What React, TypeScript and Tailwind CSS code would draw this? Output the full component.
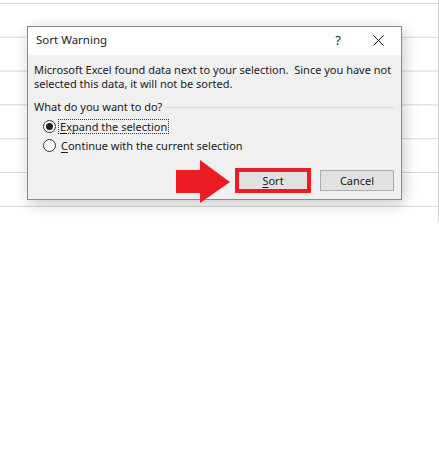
import React from "react";

const font = { fontFamily: '"Noto Sans", "Open Sans", sans-serif' };

function Radio({ checked }: { checked?: boolean }) {
  return (
    <span className="flex h-[13px] w-[13px] items-center justify-center rounded-full border border-[#333333] bg-white">
      {checked && <span className="h-[7px] w-[7px] rounded-full bg-[#2b1a2b]" />}
    </span>
  );
}

export default function App() {
  return (
    <div className="relative h-[454px] w-[439px] overflow-hidden bg-white text-[11px] text-[#1a1a1a]" style={font}>
      {/* spreadsheet grid behind the dialog */}
      <div className="h-[222px] w-full bg-[linear-gradient(to_right,#d6d6d6_1px,transparent_1px),linear-gradient(to_bottom,#d6d6d6_1px,transparent_1px)] bg-[size:109px_33.8px] bg-[position:2px_3px]" />

      {/* Sort Warning dialog */}
      <div className="absolute left-[27px] top-[26px] flex h-[174px] w-[375px] flex-col border border-[#8a8a8a] bg-[#f0f0f0] shadow-[2px_4px_14px_rgba(0,0,0,0.22)]">
        <div className="flex h-[28px] items-center bg-white pb-[2px] pl-[8px]">
          <span className="flex-1 text-[11.5px] leading-none">Sort Warning</span>
          <span className="w-[12px] text-center text-[13px] leading-none">?</span>
          <span className="ml-[28px] mr-[17px] flex h-[12px] w-[12px] items-center justify-center">
            <svg width="11" height="11" viewBox="0 0 11 11">
              <path d="M0.5 0.5 L10.5 10.5 M10.5 0.5 L0.5 10.5" stroke="#1a1a1a" strokeWidth="1" />
            </svg>
          </span>
        </div>

        <div className="flex flex-1 flex-col px-[6px] pt-[8px]">
          <p className="whitespace-pre leading-[14px]">
            {"Microsoft Excel found data next to your selection.  Since you have not\nselected this data, it will not be sorted."}
          </p>

          <div className="mt-[9px] flex items-center leading-[14px]">
            <span>What do you want to do?</span>
            <span className="ml-[4px] mr-[1px] h-px flex-1 bg-[#dadada]" />
          </div>

          <div className="ml-[9px] mt-[3px] flex flex-col">
            <label className="flex h-[19px] items-center gap-[2px]">
              <Radio checked />
              <span className="border border-dotted border-[#333333] px-px leading-[13px]">
                <span className="underline underline-offset-2">E</span>xpand the selection
              </span>
            </label>
            <label className="flex h-[19px] items-center gap-[5px]">
              <Radio />
              <span className="leading-[13px]">
                <span className="underline underline-offset-2">C</span>ontinue with the current selection
              </span>
            </label>
          </div>

          <div className="mt-[15px] flex justify-end gap-[10px] pr-[1px]">
            <div className="relative">
              <button className="h-[21px] w-[74px] border border-[#0078d7] bg-[#e1e1e1] leading-none">
                <span className="underline underline-offset-2">S</span>ort
              </button>
              <span className="absolute -left-[1px] -right-[1px] -bottom-[2px] -top-[2px] border-[4px] border-[#ed1c24]" />
            </div>
            <button className="h-[21px] w-[74px] border border-[#adadad] bg-[#e1e1e1] leading-none">Cancel</button>
          </div>
        </div>
      </div>

      {/* red pointer arrow */}
      <svg className="absolute left-[176px] top-[160px]" width="56" height="44" viewBox="0 0 56 44">
        <polygon points="0,10 24,10 24,0 54,22 24,43 24,33 0,33" fill="#ed1c24" />
      </svg>
    </div>
  );
}
